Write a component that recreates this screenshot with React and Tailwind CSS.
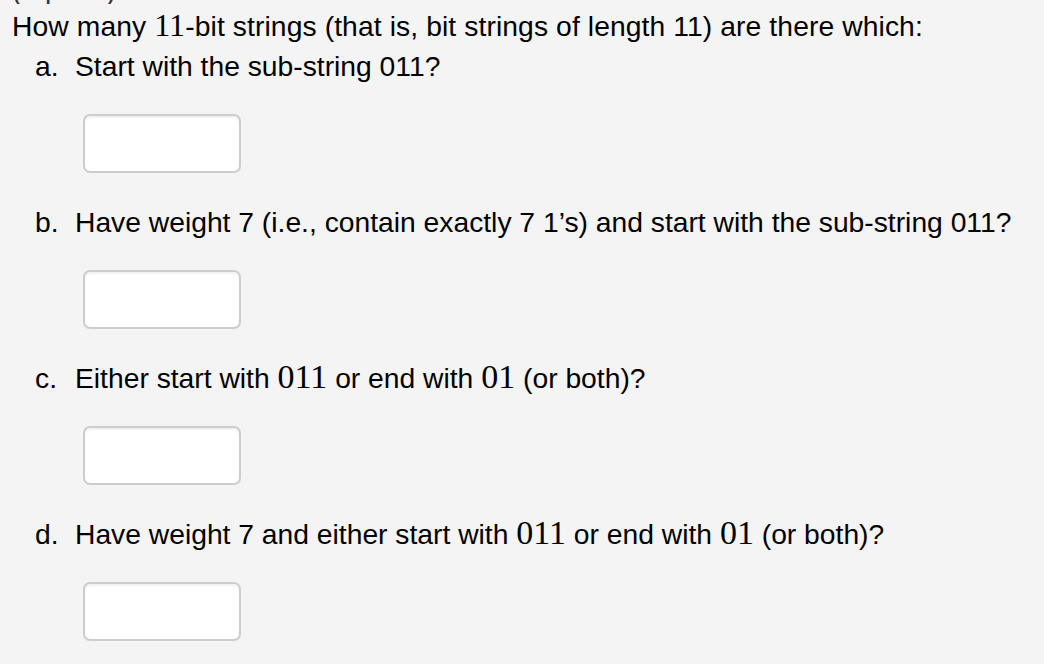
import React from "react";

const serif = "font-['Liberation_Serif','Times_New_Roman',serif] text-[34px] leading-[0]";
const serifTop = "font-['Liberation_Serif','Times_New_Roman',serif] text-[32px] leading-[0]";

function Box() {
  return (
    <div className="ml-[83px] mt-[32px] h-[59px] w-[158px] rounded-[7px] border-2 border-[#cdcdcd] bg-white shadow-[inset_0_2px_2px_rgba(0,0,0,0.06)]" />
  );
}

function Item({ label, children, first }) {
  return (
    <div className={first ? "mt-[8px]" : "mt-[33px]"}>
      <div className="flex h-[32px] items-baseline leading-[32px]">
        <span className="w-[40px] pl-[35px] box-content shrink-0 text-left">{label}</span>
        <span className="whitespace-nowrap">{children}</span>
      </div>
      <Box />
    </div>
  );
}

export default function App() {
  return (
    <div className="min-h-[664px] w-[1044px] overflow-hidden bg-[#f4f4f4] text-[28.25px] text-black font-['Liberation_Sans',Arial,sans-serif]">
      <div className="h-[4px] overflow-hidden pl-[12px]">
        <div className="-mt-[24px] leading-[28px] text-[#333]">(1 point)</div>
      </div>
      <div className="mt-[6px] h-[32px] pl-[12px] leading-[32px] whitespace-nowrap tracking-[0.1px]">
        How many <span className={serifTop}>11</span>-bit strings (that is, bit strings of length 11) are there which:
      </div>
      <Item label="a." first>Start with the sub-string 011?</Item>
      <Item label="b.">Have weight 7 (i.e., contain exactly 7 1’s) and start with the sub-string 011?</Item>
      <Item label="c.">
        Either start with <span className={serif}>011</span> or end with <span className={serif}>01</span> (or both)?
      </Item>
      <Item label="d.">
        Have weight 7 and either start with <span className={serif}>011</span> or end with <span className={serif}>01</span> (or both)?
      </Item>
    </div>
  );
}
